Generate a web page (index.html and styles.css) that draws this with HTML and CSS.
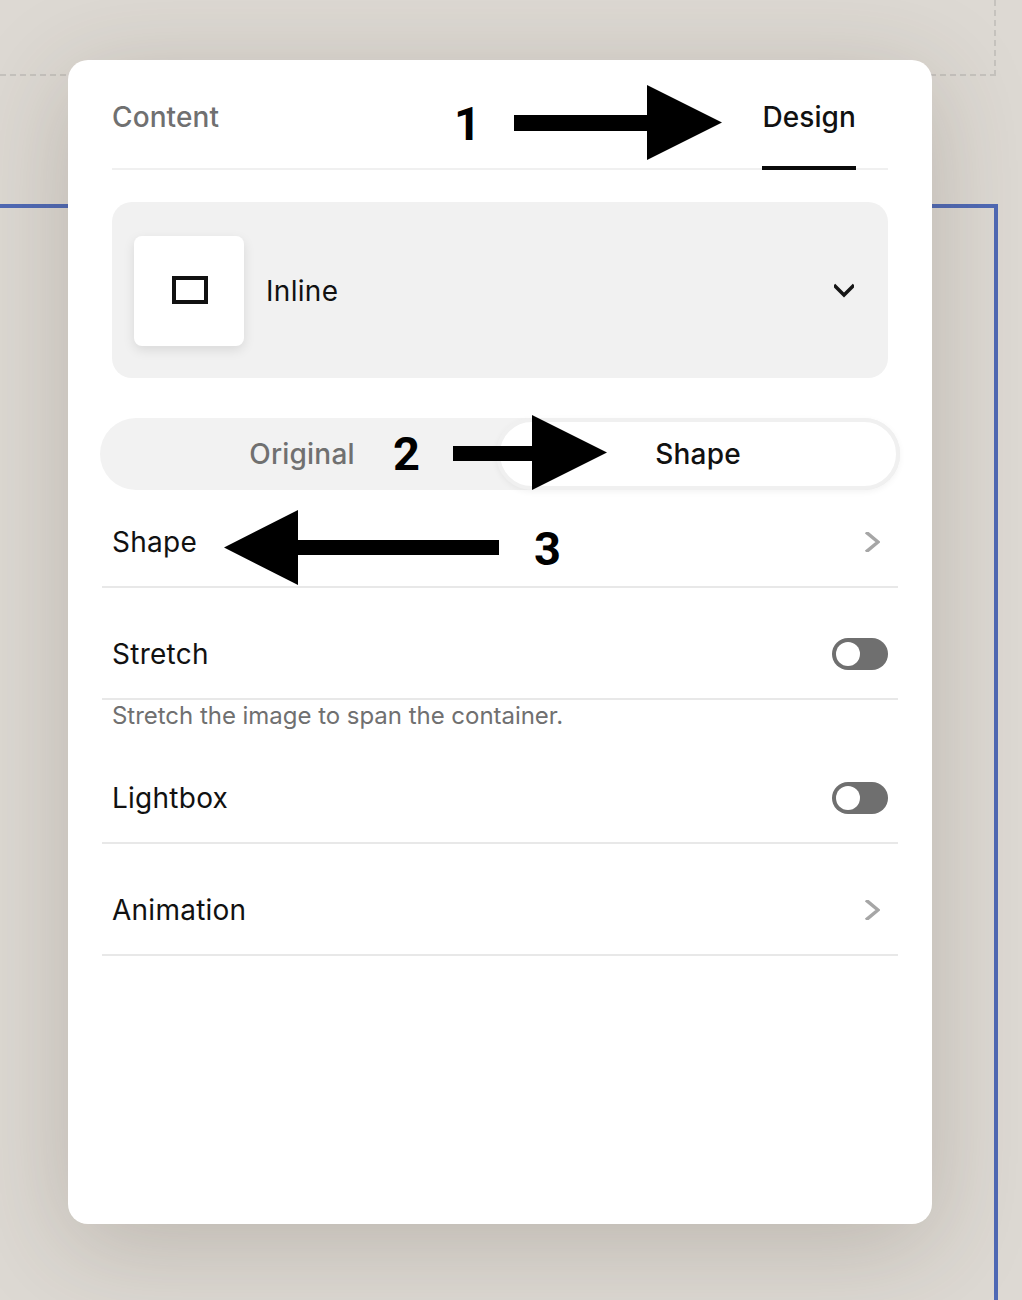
FILE: index.html
```html
<!DOCTYPE html>
<html lang="en">
<head>
<meta charset="utf-8">
<title>Image block design panel</title>
<link rel="stylesheet" href="styles.css">
</head>
<body>
<div class="guide-dashed"></div>
<div class="guide-blue"></div>
<main class="panel">
  <nav class="tabs">
    <span class="tab">Content</span>
    <span class="tab tab-active">Design</span>
  </nav>
  <div class="select">
    <div class="thumb"><span class="thumb-icon"></span></div>
    <span class="select-label">Inline</span>
    <svg class="chev-down" viewBox="0 0 20 15"><path d="M0 2 L10 12 L20 2" fill="none" stroke="#161616" stroke-width="3.4"/></svg>
  </div>
  <div class="segmented">
    <span class="seg">Original</span>
    <span class="seg seg-active">Shape</span>
  </div>
  <div class="row row-first">
    <span>Shape</span>
    <svg class="chev-right" viewBox="0 0 15 20"><path d="M1 0 L13 10 L1 20" fill="none" stroke="#a6a6a6" stroke-width="3.4"/></svg>
  </div>
  <div class="row">
    <span>Stretch</span>
    <span class="toggle"><span class="knob"></span></span>
  </div>
  <p class="hint">Stretch the image to span the container.</p>
  <div class="row">
    <span>Lightbox</span>
    <span class="toggle"><span class="knob"></span></span>
  </div>
  <div class="row">
    <span>Animation</span>
    <svg class="chev-right" viewBox="0 0 15 20"><path d="M1 0 L13 10 L1 20" fill="none" stroke="#a6a6a6" stroke-width="3.4"/></svg>
  </div>
</main>
<svg class="arrows" viewBox="0 0 1022 1300">
  <polygon points="514,115 647,115 647,85 722,122.500 647,160 647,131 514,131"/>
  <polygon points="453,446 532,446 532,415 607,452.500 532,490 532,461 453,461"/>
  <polygon points="499,540 298,540 298,510 224,547.500 298,585 298,555 499,555"/>
</svg>
<span class="num num-1">1</span>
<span class="num num-2">2</span>
<span class="num num-3">3</span>
</body>
</html>
```
FILE: styles.css
```css
* { box-sizing: border-box; }
html, body { margin: 0; height: 1300px; overflow: hidden; }
body {
  position: relative;
  width: 1022px;
  background: #ddd9d3;
  font-family: Inter, "Liberation Sans", sans-serif;
  color: #111;
  padding: 60px 90px 76px 68px;
}
.guide-dashed {
  position: absolute;
  left: 0;
  top: 0;
  width: 996px;
  height: 76px;
  border-right: 2px dashed #c6c3be;
  border-bottom: 2px dashed #c6c3be;
}
.guide-blue {
  position: absolute;
  left: 0;
  top: 204px;
  width: 998px;
  height: 1096px;
  border-top: 4px solid #4f69b5;
  border-right: 4px solid #4f69b5;
}
.panel {
  position: relative;
  height: 1164px;
  background: #fff;
  border-radius: 20px;
  padding: 0 44px;
  box-shadow: 0 20px 100px rgba(70, 55, 40, 0.22);
}
.tabs {
  display: flex;
  justify-content: space-between;
  height: 110px;
  border-bottom: 2px solid #f0f0f0;
  padding-right: 32px;
}
.tab {
  font-size: 28px;
  font-weight: 500;
  letter-spacing: 0.1px;
  color: #707070;
  line-height: 34px;
  padding-top: 40px;
  height: 110px;
}
.tab-active {
  color: #111;
  border-bottom: 4px solid #0a0a0a;
}
.select {
  display: flex;
  align-items: center;
  height: 176px;
  margin-top: 32px;
  padding: 0 34px 0 22px;
  background: #f1f1f1;
  border-radius: 20px;
}
.thumb {
  display: flex;
  align-items: center;
  justify-content: center;
  width: 110px;
  height: 110px;
  margin-top: 2px;
  background: #fff;
  border-radius: 8px;
  box-shadow: 0 4px 12px rgba(0, 0, 0, 0.1);
  padding-left: 2px;
  flex: none;
}
.thumb-icon {
  width: 36px;
  height: 28px;
  margin-top: -2px;
  border: 4px solid #111;
}
.select-label {
  flex: 1;
  margin: 2px 0 0 22px;
  font-size: 28px;
  letter-spacing: 0.3px;
  line-height: 34px;
}
.chev-down { width: 20px; height: 15px; }
.segmented {
  display: flex;
  height: 72px;
  margin: 40px -12px 0;
  background: #f2f2f2;
  border-radius: 36px;
}
.seg {
  flex: 1;
  display: flex;
  align-items: center;
  justify-content: center;
  padding-left: 8px;
  font-size: 28px;
  font-weight: 500;
  letter-spacing: 0.2px;
  color: #707070;
}
.seg-active {
  flex: 0 0 404px;
  padding-left: 0;
  color: #111;
  background: #fff;
  border: 4px solid #f0f0f0;
  border-radius: 36px;
  box-shadow: 0 2px 6px rgba(0, 0, 0, 0.05);
}
.row {
  display: flex;
  align-items: center;
  justify-content: space-between;
  height: 112px;
  margin: 0 -10px;
  padding: 22px 10px 0;
  border-bottom: 2px solid #e8e8e8;
  font-size: 28px;
  letter-spacing: 0.25px;
}
.row-first { height: 98px; padding-top: 8px; }
.chev-right { width: 15px; height: 20px; margin-right: 8px; }
.toggle {
  display: flex;
  align-items: center;
  width: 56px;
  height: 32px;
  padding-left: 4px;
  border-radius: 16px;
  background: #6f6f6f;
}
.knob {
  width: 24px;
  height: 24px;
  border-radius: 50%;
  background: #fff;
}
.hint {
  margin: 0;
  height: 32px;
  font-size: 24px;
  letter-spacing: -0.03px;
  line-height: 32px;
  color: #707070;
}
.arrows {
  position: absolute;
  left: 0;
  top: 0;
  width: 1022px;
  height: 1300px;
  pointer-events: none;
}
.num {
  position: absolute;
  font-family: Roboto, "Liberation Sans", sans-serif;
  font-weight: 700;
  font-size: 47px;
  line-height: 48px;
  color: #000;
}
.num-1 { left: 454px; top: 100px; }
.num-2 { left: 393px; top: 430px; }
.num-3 { left: 534px; top: 525px; }
```
